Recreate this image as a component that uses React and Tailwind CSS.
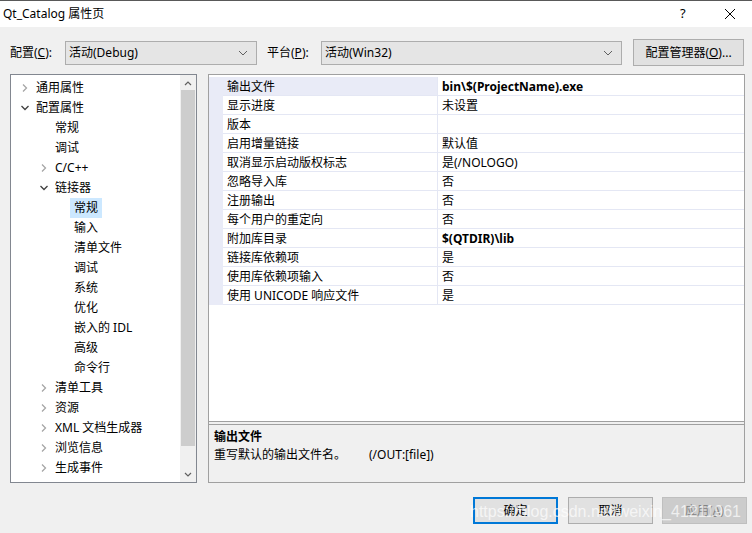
const font = { fontFamily: '"Noto Sans", "Noto Sans CJK SC", sans-serif' }

const treeItems = [
  { label: '通用属性', level: 0, chevron: 'right' },
  { label: '配置属性', level: 0, chevron: 'down' },
  { label: '常规', level: 1 },
  { label: '调试', level: 1 },
  { label: 'C/C++', level: 1, chevron: 'right' },
  { label: '链接器', level: 1, chevron: 'down' },
  { label: '常规', level: 2, selected: true },
  { label: '输入', level: 2 },
  { label: '清单文件', level: 2 },
  { label: '调试', level: 2 },
  { label: '系统', level: 2 },
  { label: '优化', level: 2 },
  { label: '嵌入的 IDL', level: 2 },
  { label: '高级', level: 2 },
  { label: '命令行', level: 2 },
  { label: '清单工具', level: 1, chevron: 'right' },
  { label: '资源', level: 1, chevron: 'right' },
  { label: 'XML 文档生成器', level: 1, chevron: 'right' },
  { label: '浏览信息', level: 1, chevron: 'right' },
  { label: '生成事件', level: 1, chevron: 'right' },
]

const props = [
  ['输出文件', 'bin\\$(ProjectName).exe', true],
  ['显示进度', '未设置'],
  ['版本', ''],
  ['启用增量链接', '默认值'],
  ['取消显示启动版权标志', '是(/NOLOGO)'],
  ['忽略导入库', '否'],
  ['注册输出', '否'],
  ['每个用户的重定向', '否'],
  ['附加库目录', '$(QTDIR)\\lib', true],
  ['链接库依赖项', '是'],
  ['使用库依赖项输入', '否'],
  ['使用 UNICODE 响应文件', '是'],
]

function Chevron({ dir }) {
  if (dir === 'down') {
    return (
      <svg width="10" height="10" viewBox="0 0 10 10" className="shrink-0">
        <path d="M1.5 3 L5 6.5 L8.5 3" fill="none" stroke="#404040" strokeWidth="1.3" />
      </svg>
    )
  }
  return (
    <svg width="10" height="10" viewBox="0 0 10 10" className="shrink-0">
      <path d="M3 1.5 L6.5 5 L3 8.5" fill="none" stroke="#a6a6a6" strokeWidth="1.3" />
    </svg>
  )
}

function ComboArrow() {
  return (
    <svg width="10" height="6" viewBox="0 0 10 6">
      <path d="M1 1 L5 5 L9 1" fill="none" stroke="#606060" strokeWidth="1" />
    </svg>
  )
}

function Combo({ width, text }) {
  return (
    <div
      className="flex h-[24px] items-center justify-between border border-[#adadad] bg-[#e5e5e5] pl-[3px] pr-[8px] text-[12px] text-black"
      style={{ width }}
    >
      <span>{text}</span>
      <ComboArrow />
    </div>
  )
}

function TreeRow({ item }) {
  const chevronLeft = item.level === 0 ? 16 : 35
  const textLeft = item.level === 0 ? 25 : item.level === 1 ? 44 : 63
  return (
    <div className="relative h-[20px] text-[12px] leading-[20px] text-black">
      {item.chevron && (
        <span className="absolute top-[5px]" style={{ left: chevronLeft - 7 }}>
          <Chevron dir={item.chevron} />
        </span>
      )}
      <span
        className={`absolute top-0 h-[20px] ${item.selected ? 'bg-[#cce8ff] px-[4px]' : ''}`}
        style={{ left: item.selected ? textLeft - 4 : textLeft }}
      >
        {item.label}
      </span>
    </div>
  )
}

export default function App() {
  return (
    <div className="relative flex h-[533px] w-[752px] flex-col overflow-hidden bg-[#f0f0f0]" style={font}>
      <div className="flex h-[27px] items-center border-t border-[#595959] bg-white pl-[3px] text-[12px] text-black">
        <span className="flex-1">Qt_Catalog 属性页</span>
        <span className="w-[18px] text-[13px]">?</span>
        <svg width="12" height="12" viewBox="0 0 12 12" className="ml-[26px] mr-[16px]">
          <path d="M1 1 L11 11 M11 1 L1 11" stroke="#000" strokeWidth="1" />
        </svg>
      </div>

      <div className="mt-[12px] flex h-[27px] items-center pl-[10px] text-[12px] text-black">
        <span className="w-[55px]">
          配置(<span className="underline">C</span>):
        </span>
        <Combo width={192} text="活动(Debug)" />
        <span className="ml-[10px] w-[54px]">
          平台(<span className="underline">P</span>):
        </span>
        <Combo width={301} text="活动(Win32)" />
        <div className="ml-[11px] flex h-[27px] w-[111px] items-center justify-center border border-[#adadad] bg-[#e1e1e1]">
          配置管理器(<span className="underline">O</span>)...
        </div>
      </div>

      <div className="mt-[8px] flex h-[409px] pl-[10px]">
        <div className="flex w-[187px] border border-[#828790] bg-white">
          <div className="flex-1 pt-[3px]">
            {treeItems.map((item, i) => (
              <TreeRow key={i} item={item} />
            ))}
          </div>
          <div className="flex w-[16px] flex-col bg-[#f0f0f0]">
            <div className="flex h-[15px] items-center justify-center">
              <svg width="8" height="6" viewBox="0 0 8 6">
                <path d="M1 5 L4 2 L7 5" fill="none" stroke="#606060" strokeWidth="1.2" />
              </svg>
            </div>
            <div className="mx-[1px] h-[356px] bg-[#cdcdcd]" />
            <div className="flex flex-1 items-end justify-center pb-[4px]">
              <svg width="8" height="6" viewBox="0 0 8 6">
                <path d="M1 1 L4 4 L7 1" fill="none" stroke="#606060" strokeWidth="1.2" />
              </svg>
            </div>
          </div>
        </div>

        <div className="ml-[11px] flex w-[537px] flex-col border border-[#a0a0a0] bg-white">
          <div className="flex-1 pt-[2px]">
            {props.map(([name, value, bold], i) => (
              <div key={i} className="flex h-[19px] text-[12px] leading-[20px] text-black">
                <div className="w-[14px] bg-[#e9ebf7]" />
                <div
                  className={`w-[215px] border-b border-r border-[#e4e7f4] pl-[4px] ${i === 0 ? 'bg-[#e9ebf7]' : ''}`}
                >
                  {name}
                </div>
                <div className={`flex-1 border-b border-[#e4e7f4] pl-[4px] ${bold ? 'font-bold' : ''}`}>{value}</div>
              </div>
            ))}
          </div>
          <div className="h-[4px] border-y border-[#a0a0a0] bg-[#f0f0f0]" />
          <div className="h-[57px] bg-[#f0f0f0] pl-[5px] pt-[3px] text-[12px] leading-[18px] text-black">
            <div className="font-bold">输出文件</div>
            <div>
              重写默认的输出文件名。<span className="ml-[23px]">(/OUT:[file])</span>
            </div>
          </div>
        </div>
      </div>

      <div className="mt-[14px] flex h-[27px] pl-[473px] text-[12px] text-black">
        <div className="flex w-[85px] items-center justify-center border-2 border-[#0078d7] bg-[#e1e1e1]">确定</div>
        <div className="ml-[10px] flex w-[85px] items-center justify-center border border-[#adadad] bg-[#e1e1e1]">取消</div>
        <div className="ml-[9px] flex w-[85px] items-center justify-center border border-[#bfbfbf] bg-[#cccccc] text-[#838383]">
          应用(<span className="underline">A</span>)
        </div>
      </div>

      <div
        className="pointer-events-none absolute left-[470px] top-[500px] text-[16px] text-white/70"
        style={{ fontFamily: '"Liberation Sans", sans-serif' }}
      >
        https://blog.csdn.net/weixin_41211961
      </div>
    </div>
  )
}
